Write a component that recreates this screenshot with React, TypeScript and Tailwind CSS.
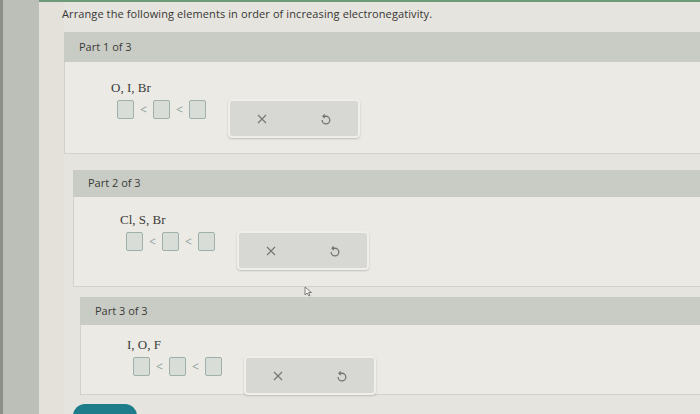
import React from "react";

type Part = {
  label: string;
  elements: string;
  indent: string;
  headerH: string;
  bodyH: string;
  bodyPt: string;
  gapTop: string;
};

const parts: Part[] = [
  { label: "Part 1 of 3", elements: "O, I, Br", indent: "ml-0", headerH: "h-[30px]", bodyH: "h-[92px]", bodyPt: "pt-[18px]", gapTop: "mt-[19px]" },
  { label: "Part 2 of 3", elements: "Cl, S, Br", indent: "ml-[9px]", headerH: "h-[27px]", bodyH: "h-[90px]", bodyPt: "pt-[15px]", gapTop: "mt-[16px]" },
  { label: "Part 3 of 3", elements: "I, O, F", indent: "ml-[16px]", headerH: "h-[28px]", bodyH: "h-[70px]", bodyPt: "pt-[12px]", gapTop: "mt-[10px]" },
];

function XIcon() {
  return (
    <svg width="10" height="10" viewBox="0 0 10 10" className="text-[#747472]">
      <path d="M1 1 L9 9 M9 1 L1 9" stroke="currentColor" strokeWidth="1.1" fill="none" />
    </svg>
  );
}

function UndoIcon() {
  return (
    <svg width="11" height="12" viewBox="0 0 12 13" className="text-[#747472]">
      <path d="M4 3.5 H6.5 A4.2 4.2 0 1 1 2.3 7.7" stroke="currentColor" strokeWidth="1.4" fill="none" />
      <path d="M5.2 1.6 L3.2 3.5 L5.2 5.4" stroke="currentColor" strokeWidth="1.3" fill="none" />
    </svg>
  );
}

function Slot() {
  return <div className="h-[19px] w-[17px] rounded-[2px] border border-[#9fb0aa] bg-[#d9ddd7]" />;
}

function PartBlock({ p }: { p: Part }) {
  return (
    <section className={`${p.indent} ${p.gapTop}`}>
      <div className={`${p.headerH} flex items-center bg-[#c9ccc5] pl-[15px] text-[11px] text-[#3a3a38]`}>
        {p.label}
      </div>
      <div className={`${p.bodyH} ${p.bodyPt} border-b border-l border-[#d2d1cb] bg-[#ebeae5]`}>
        <div className="pl-[46px] font-['Liberation_Serif',serif] text-[13px] leading-[15px] text-[#3c3c3a]">
          {p.elements}
        </div>
        <div className="mt-[4px] flex items-start">
          <div className="flex w-[163px] items-center pl-[52px] pt-[1px]">
            <Slot />
            <span className="mx-[6px] text-[12px] leading-none text-[#8fa39d]">&lt;</span>
            <Slot />
            <span className="mx-[6px] text-[12px] leading-none text-[#8fa39d]">&lt;</span>
            <Slot />
          </div>
          <div className="flex h-[39px] w-[132px] items-center justify-around rounded-[4px] border-2 border-[#efeeea] bg-[#d7d7d3] shadow-[0_1px_2px_rgba(0,0,0,0.18)]">
            <XIcon />
            <UndoIcon />
          </div>
        </div>
      </div>
    </section>
  );
}

export default function App() {
  return (
    <div className="relative flex h-[414px] w-[700px] overflow-hidden bg-[#e6e4de] font-['Open_Sans',sans-serif]">
      <div className="w-[3px] bg-[#8d908a]" />
      <div className="w-[36px] bg-[#bcbfb8]" />
      <div className="w-[25px] bg-[#e3e1da]" />
      <div className="flex-1">
        <div className="ml-[-25px] h-[2px] bg-[#6f9a7a]" />
        <div className="ml-[-2px] pt-[5px] text-[11px] leading-[14px] tracking-[0.1px] text-[#363634]">
          Arrange the following elements in order of increasing electronegativity.
        </div>
        <div className="mt-[-8px]">
          {parts.map((p) => (
            <PartBlock key={p.label} p={p} />
          ))}
        </div>
        <div className="ml-[9px] mt-[9px] h-[24px] w-[64px] rounded-t-[12px] bg-[#1e7d8b]" />
      </div>
      <svg className="absolute left-[304px] top-[286px]" width="9" height="11" viewBox="0 0 9 11">
        <path d="M1 1 L1 9 L3 7 L5 10 L6 9.5 L4.5 6.5 L7.5 6.5 Z" fill="#f4f4f2" stroke="#666" strokeWidth="0.8" />
      </svg>
    </div>
  );
}
